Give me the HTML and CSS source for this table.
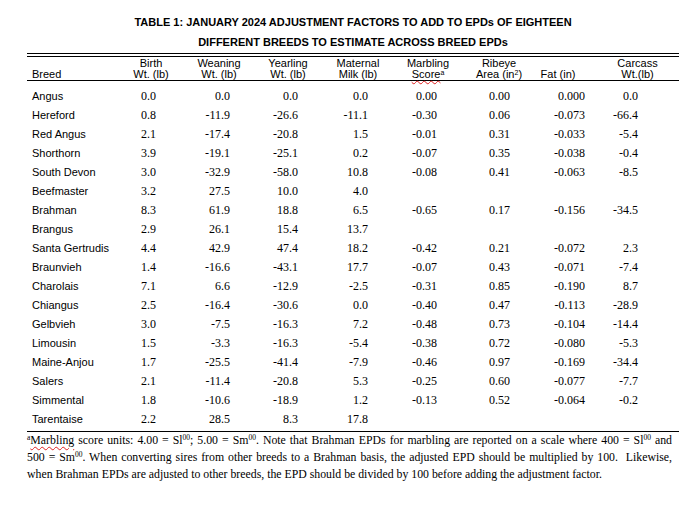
FILE: index.html
```html
<!DOCTYPE html>
<html>
<head>
<meta charset="utf-8">
<link rel="stylesheet" href="styles.css">
</head>
<body>
<div class="page">
  <div class="title">TABLE 1: JANUARY 2024 ADJUSTMENT FACTORS TO ADD TO EPDs OF EIGHTEEN<br>DIFFERENT BREEDS TO ESTIMATE ACROSS BREED EPDs</div>
  <table class="epd">
    <colgroup>
      <col class="c-breed"><col class="c-birth"><col class="c-wean"><col class="c-year"><col class="c-milk"><col class="c-marb"><col class="c-rib"><col class="c-fat"><col class="c-carc">
    </colgroup>
    <thead>
      <tr>
        <th class="h-breed">Breed</th>
        <th>Birth<br>Wt. (lb)</th>
        <th>Weaning<br>Wt. (lb)</th>
        <th>Yearling<br>Wt. (lb)</th>
        <th>Maternal<br>Milk (lb)</th>
        <th>Marbling<br><span class="spell">Score</span><span class="sup sup-h">a</span></th>
        <th>Ribeye<br>Area (in<span class="sup sup-h">2</span>)</th>
        <th class="h-fat">Fat (in)</th>
        <th>Carcass<br>Wt.(lb)</th>
      </tr>
    </thead>
    <tbody>
      <tr><td class="b">Angus</td><td class="n1">0.0</td><td class="n2">0.0</td><td class="n3">0.0</td><td class="n4">0.0</td><td class="n5">0.00</td><td class="n6">0.00</td><td class="n7">0.000</td><td class="n8">0.0</td></tr>
      <tr><td class="b">Hereford</td><td class="n1">0.8</td><td class="n2">-11.9</td><td class="n3">-26.6</td><td class="n4">-11.1</td><td class="n5">-0.30</td><td class="n6">0.06</td><td class="n7">-0.073</td><td class="n8">-66.4</td></tr>
      <tr><td class="b">Red Angus</td><td class="n1">2.1</td><td class="n2">-17.4</td><td class="n3">-20.8</td><td class="n4">1.5</td><td class="n5">-0.01</td><td class="n6">0.31</td><td class="n7">-0.033</td><td class="n8">-5.4</td></tr>
      <tr><td class="b">Shorthorn</td><td class="n1">3.9</td><td class="n2">-19.1</td><td class="n3">-25.1</td><td class="n4">0.2</td><td class="n5">-0.07</td><td class="n6">0.35</td><td class="n7">-0.038</td><td class="n8">-0.4</td></tr>
      <tr><td class="b">South Devon</td><td class="n1">3.0</td><td class="n2">-32.9</td><td class="n3">-58.0</td><td class="n4">10.8</td><td class="n5">-0.08</td><td class="n6">0.41</td><td class="n7">-0.063</td><td class="n8">-8.5</td></tr>
      <tr><td class="b">Beefmaster</td><td class="n1">3.2</td><td class="n2">27.5</td><td class="n3">10.0</td><td class="n4">4.0</td><td class="n5"></td><td class="n6"></td><td class="n7"></td><td class="n8"></td></tr>
      <tr><td class="b">Brahman</td><td class="n1">8.3</td><td class="n2">61.9</td><td class="n3">18.8</td><td class="n4">6.5</td><td class="n5">-0.65</td><td class="n6">0.17</td><td class="n7">-0.156</td><td class="n8">-34.5</td></tr>
      <tr><td class="b">Brangus</td><td class="n1">2.9</td><td class="n2">26.1</td><td class="n3">15.4</td><td class="n4">13.7</td><td class="n5"></td><td class="n6"></td><td class="n7"></td><td class="n8"></td></tr>
      <tr><td class="b">Santa Gertrudis</td><td class="n1">4.4</td><td class="n2">42.9</td><td class="n3">47.4</td><td class="n4">18.2</td><td class="n5">-0.42</td><td class="n6">0.21</td><td class="n7">-0.072</td><td class="n8">2.3</td></tr>
      <tr><td class="b">Braunvieh</td><td class="n1">1.4</td><td class="n2">-16.6</td><td class="n3">-43.1</td><td class="n4">17.7</td><td class="n5">-0.07</td><td class="n6">0.43</td><td class="n7">-0.071</td><td class="n8">-7.4</td></tr>
      <tr><td class="b">Charolais</td><td class="n1">7.1</td><td class="n2">6.6</td><td class="n3">-12.9</td><td class="n4">-2.5</td><td class="n5">-0.31</td><td class="n6">0.85</td><td class="n7">-0.190</td><td class="n8">8.7</td></tr>
      <tr><td class="b">Chiangus</td><td class="n1">2.5</td><td class="n2">-16.4</td><td class="n3">-30.6</td><td class="n4">0.0</td><td class="n5">-0.40</td><td class="n6">0.47</td><td class="n7">-0.113</td><td class="n8">-28.9</td></tr>
      <tr><td class="b">Gelbvieh</td><td class="n1">3.0</td><td class="n2">-7.5</td><td class="n3">-16.3</td><td class="n4">7.2</td><td class="n5">-0.48</td><td class="n6">0.73</td><td class="n7">-0.104</td><td class="n8">-14.4</td></tr>
      <tr><td class="b">Limousin</td><td class="n1">1.5</td><td class="n2">-3.3</td><td class="n3">-16.3</td><td class="n4">-5.4</td><td class="n5">-0.38</td><td class="n6">0.72</td><td class="n7">-0.080</td><td class="n8">-5.3</td></tr>
      <tr><td class="b">Maine-Anjou</td><td class="n1">1.7</td><td class="n2">-25.5</td><td class="n3">-41.4</td><td class="n4">-7.9</td><td class="n5">-0.46</td><td class="n6">0.97</td><td class="n7">-0.169</td><td class="n8">-34.4</td></tr>
      <tr><td class="b">Salers</td><td class="n1">2.1</td><td class="n2">-11.4</td><td class="n3">-20.8</td><td class="n4">5.3</td><td class="n5">-0.25</td><td class="n6">0.60</td><td class="n7">-0.077</td><td class="n8">-7.7</td></tr>
      <tr><td class="b">Simmental</td><td class="n1">1.8</td><td class="n2">-10.6</td><td class="n3">-18.9</td><td class="n4">1.2</td><td class="n5">-0.13</td><td class="n6">0.52</td><td class="n7">-0.064</td><td class="n8">-0.2</td></tr>
      <tr><td class="b">Tarentaise</td><td class="n1">2.2</td><td class="n2">28.5</td><td class="n3">8.3</td><td class="n4">17.8</td><td class="n5"></td><td class="n6"></td><td class="n7"></td><td class="n8"></td></tr>
    </tbody>
  </table>
  <div class="note">
    <div class="note-line justified"><span class="sup">a</span><span class="spell">Marbling</span> score units: 4.00 = Sl<span class="sup">00</span>; 5.00 = Sm<span class="sup">00</span>. Note that Brahman EPDs for marbling are reported on a scale where 400 = Sl<span class="sup">00</span> and</div>
    <div class="note-line justified">500 = Sm<span class="sup">00</span>. When converting sires from other breeds to a Brahman basis, the adjusted EPD should be multiplied by 100.&nbsp; Likewise,</div>
    <div class="note-line">when Brahman EPDs are adjusted to other breeds, the EPD should be divided by 100 before adding the adjustment factor.</div>
  </div>
</div>
</body>
</html>
```

FILE: styles.css
```css
html, body {
  margin: 0;
  padding: 0;
  background: #ffffff;
  color: #000000;
}

.page {
  padding: 12px 0 0 27px;
  width: 652px;
}

.title {
  width: 652px;
  text-align: center;
  font-family: "Liberation Sans", Arial, sans-serif;
  font-weight: bold;
  font-size: 11px;
  line-height: 20px;
  height: 41px;
}

.epd {
  width: 652px;
  border-collapse: collapse;
  table-layout: fixed;
  border-top: 4px double #000;
}

.c-breed { width: 93px; }
.c-birth { width: 62px; }
.c-wean { width: 74px; }
.c-year { width: 64px; }
.c-milk { width: 76px; }
.c-marb { width: 64px; }
.c-rib { width: 78px; }
.c-fat { width: 58px; }
.c-carc { width: 83px; }

.epd th {
  font-family: "Liberation Sans", Arial, sans-serif;
  font-weight: normal;
  font-size: 11px;
  line-height: 11px;
  text-align: center;
  vertical-align: bottom;
  padding: 1px 0 0 0;
  border-bottom: 1px solid #000;
  white-space: nowrap;
}

.epd th.h-breed {
  text-align: left;
  padding-left: 5px;
}

.epd th.h-fat {
  padding-right: 18px;
}

.epd td {
  height: 19px;
  padding: 0;
  line-height: 19px;
  white-space: nowrap;
  font-family: "Liberation Serif", "Times New Roman", serif;
  font-size: 12px;
  text-align: right;
  vertical-align: middle;
}

.epd td.b {
  font-family: "Liberation Sans", Arial, sans-serif;
  font-size: 11px;
  text-align: left;
  padding-left: 5px;
}

.epd td.n1 { padding-right: 26px; }
.epd td.n2 { padding-right: 26px; }
.epd td.n3 { padding-right: 22px; }
.epd td.n4 { padding-right: 28px; }
.epd td.n5 { padding-right: 23px; }
.epd td.n6 { padding-right: 28px; }
.epd td.n7 { padding-right: 11px; }
.epd td.n8 { padding-right: 41px; }

.epd tbody tr:first-child td {
  padding-top: 6px;
}

.epd tbody tr:last-child td {
  padding-bottom: 2px;
  border-bottom: 1px solid #000;
}

.sup {
  font-size: 7.5px;
  line-height: 0;
  vertical-align: 4px;
}

.sup-h {
  font-size: 7px;
  vertical-align: 3px;
}

.spell {
  text-decoration: underline wavy #e02020;
  text-decoration-thickness: 1px;
  text-underline-offset: 2px;
}

.note {
  width: 645px;
  font-family: "Liberation Serif", "Times New Roman", serif;
  font-size: 11.8px;
  line-height: 17px;
}

.note-line {
  white-space: nowrap;
}

.note-line.justified {
  white-space: normal;
  text-align: justify;
  text-align-last: justify;
}
```
